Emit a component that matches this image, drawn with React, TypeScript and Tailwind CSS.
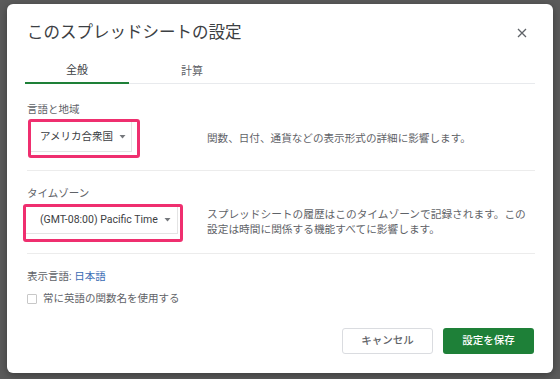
import React from "react";

const FONT = 'font-["Roboto","Noto_Sans_CJK_JP",sans-serif]';

function Caret() {
  return (
    <svg width="7" height="4" viewBox="0 0 7 4" className="ml-[6px] shrink-0">
      <polygon points="0.5,0 6.5,0 3.5,3.5" fill="#75787c" />
    </svg>
  );
}

export default function App() {
  return (
    <div className={`h-[379px] w-[560px] overflow-hidden bg-[#5b5b5b] pl-[7px] pt-[4px] ${FONT}`}>
      <div className="h-[369px] w-[546px] rounded-[6px] bg-white pl-[20px] pr-[18px] shadow-[0_2px_8px_rgba(0,0,0,0.35)]">
        {/* header */}
        <div className="flex h-[24px] translate-y-[17px] items-center justify-between">
          <h1 className="text-[16.5px] leading-[24px] font-normal text-[#3c4043]">
            このスプレッドシートの設定
          </h1>
          <svg width="10" height="10" viewBox="0 0 10 10" className="mr-[8px]">
            <path d="M1 1L9 9M9 1L1 9" stroke="#5f6368" strokeWidth="1.3" />
          </svg>
        </div>

        {/* tabs */}
        <div className="mt-[33px] ml-[-2px] flex border-b border-[#e8eaed]">
          <div className="-mb-px flex h-[23px] w-[104px] items-center justify-center border-b-2 border-[#1e8038] text-[11px] text-[#3c4043]">
            全般
          </div>
          <div className="-mb-px flex h-[23px] w-[126px] items-center justify-center text-[11px] text-[#5f6368]">
            計算
          </div>
        </div>

        {/* locale */}
        <div className="mt-[19px] text-[10.5px] leading-[14px] text-[#5f6368]">言語と地域</div>
        <div className="mt-[2px] flex items-center">
          <div className="w-[180px]">
            <div className="ml-[1px] h-[39px] w-[112px] rounded-[3px] border-[3px] border-[#ef2f6f]">
              <div className="mr-[5px] mb-[3px] flex h-[30px] items-center border-r border-b border-[#e4e4e4] pl-[9px] text-[10.5px] text-[#3c4043]">
                アメリカ合衆国
                <Caret />
              </div>
            </div>
          </div>
          <p className="text-[10.6px] leading-[15px] text-[#5f6368]">
            関数、日付、通貨などの表示形式の詳細に影響します。
          </p>
        </div>

        <div className="mt-[12px] h-px bg-[#ececec]" />

        {/* timezone */}
        <div className="mt-[16px] text-[10.5px] leading-[14px] text-[#5f6368]">タイムゾーン</div>
        <div className="mt-[3px] flex items-center">
          <div className="w-[180px]">
            <div className="ml-[-4px] h-[38px] w-[160px] rounded-[3px] border-[3px] border-[#ef2f6f]">
              <div className="mr-[2px] mb-[5px] flex h-[27px] items-center border-r border-b border-[#e4e4e4] pl-[14px] text-[10.5px] text-[#3c4043]">
                (GMT-08:00) Pacific Time
                <Caret />
              </div>
            </div>
          </div>
          <p className="-mt-[2px] text-[10.7px] leading-[15px] text-[#5f6368]">
            スプレッドシートの履歴はこのタイムゾーンで記録されます。この
            <br />
            設定は時間に関係する機能すべてに影響します。
          </p>
        </div>

        <div className="mt-[11px] h-px bg-[#ececec]" />

        {/* display language */}
        <div className="mt-[16px] text-[10.5px] leading-[14px] text-[#5f6368]">
          表示言語: <span className="text-[#3a6cb4]">日本語</span>
        </div>
        <div className="mt-[8px] flex h-[14px] items-center">
          <div className="h-[10px] w-[10px] rounded-[1px] border border-[#c8c8c8]" />
          <span className="ml-[6px] text-[10.5px] leading-[14px] text-[#5f6368]">
            常に英語の関数名を使用する
          </span>
        </div>

        {/* actions */}
        <div className="mt-[22px] flex justify-end gap-[10px] pr-[1px]">
          <button className="flex h-[26px] w-[91px] items-center justify-center rounded-[3px] border border-[#dadce0] bg-white text-[10.5px] font-medium text-[#5f6368]">
            キャンセル
          </button>
          <button className="flex h-[26px] w-[91px] items-center justify-center rounded-[3px] bg-[#1e8038] text-[10.5px] font-medium text-white">
            設定を保存
          </button>
        </div>
      </div>
    </div>
  );
}
